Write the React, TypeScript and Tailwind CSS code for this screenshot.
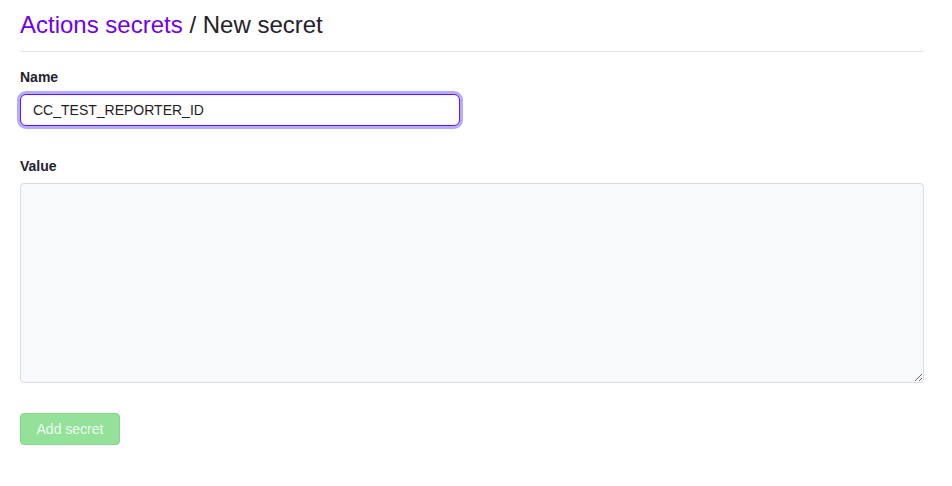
export default function App() {
  return (
    <div className="min-h-[486px] bg-white px-5 font-['Liberation_Sans',Arial,sans-serif] text-[#24222a]">
      <div className="w-[904px]">
        <h1 className="border-b border-[#e6e6ea] pb-2 pt-[7px] text-2xl leading-9 font-normal">
          <a href="#" className="text-[#6f00ee]">Actions secrets</a>
          <span> / New secret</span>
        </h1>

        <form className="flex flex-col items-start" onSubmit={(e) => e.preventDefault()}>
          <label htmlFor="secret-name" className="mt-[15px] text-sm leading-[21px] font-bold">
            Name
          </label>
          <input
            id="secret-name"
            defaultValue="CC_TEST_REPORTER_ID"
            className="mt-[6px] h-8 w-[440px] rounded-md border border-[#6a10f0] bg-white px-3 text-sm text-[#1f1d24] outline-none ring-[3px] ring-[#b2acfc]"
          />

          <label htmlFor="secret-value" className="mt-[30px] text-sm leading-[21px] font-bold">
            Value
          </label>
          <textarea
            id="secret-value"
            className="mt-[6px] h-[200px] w-full rounded border border-[#dcdce2] bg-[#f8f9fb] px-3 py-2 text-sm outline-none"
          />

          <button
            type="submit"
            disabled
            className="mt-[30px] h-8 w-[100px] rounded border border-[#86d48d] bg-[#94e29a] text-sm text-[#eefaef]"
          >
            Add secret
          </button>
        </form>
      </div>
    </div>
  );
}
